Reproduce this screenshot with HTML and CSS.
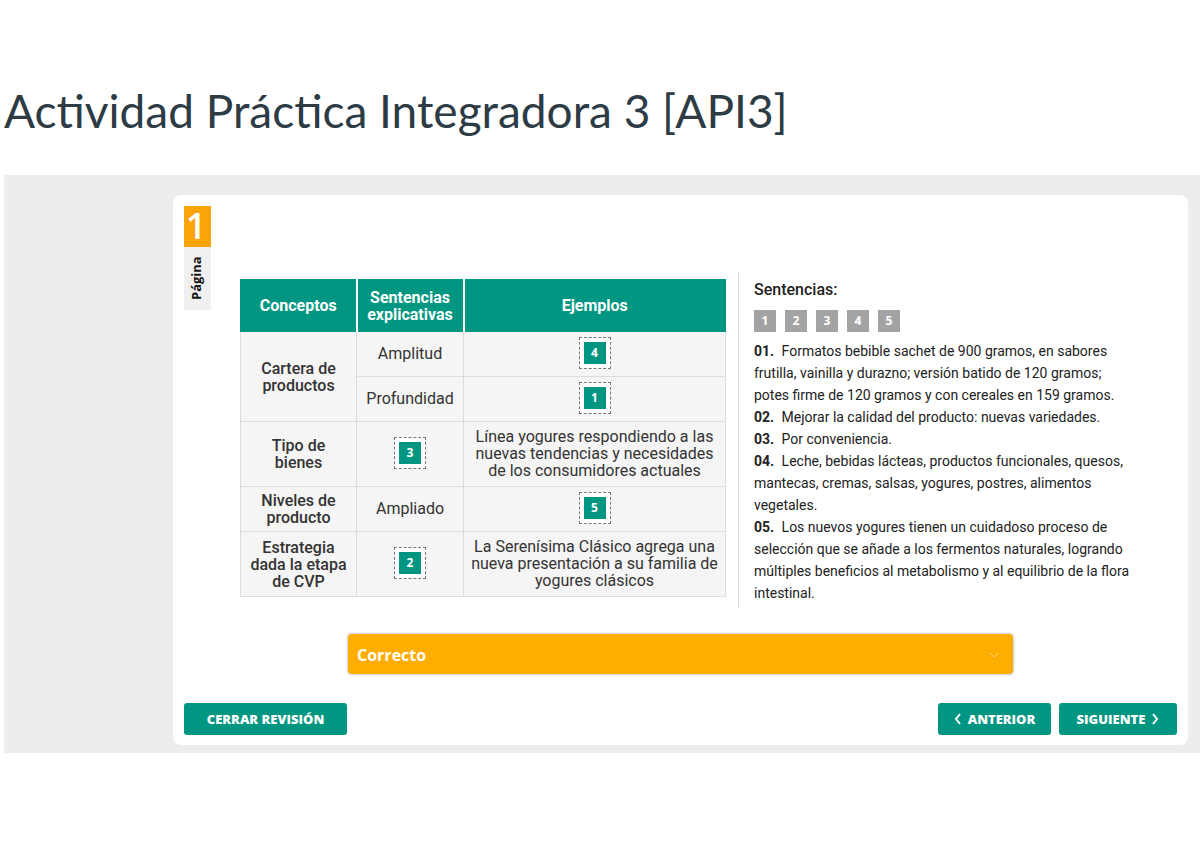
FILE: index.html
```html
<!DOCTYPE html>
<html lang="es">
<head>
    <meta charset="UTF-8">
    <meta name="viewport" content="width=device-width, initial-scale=1.0">
    <title>Actividad Práctica Integradora 3 [API3]</title>
    <link rel="stylesheet" href="styles.css">
</head>
<body>

<h1 class="title">Actividad Práctica Integradora 3 [API3]</h1>

<main class="activity">
    <div class="card">
        <div class="content">
            <div class="page-tab">
                <span class="page-number">1</span>
                <span class="page-label">Página</span>
            </div>

            <table class="concepts">
                <colgroup>
                    <col class="col-concept">
                    <col class="col-sentence">
                    <col>
                </colgroup>
                <thead>
                    <tr>
                        <th scope="col">Conceptos</th>
                        <th scope="col">Sentencias explicativas</th>
                        <th scope="col">Ejemplos</th>
                    </tr>
                </thead>
                <tbody>
                    <tr class="short">
                        <th scope="rowgroup" rowspan="2">Cartera de productos</th>
                        <td>Amplitud</td>
                        <td><span class="drop"><span class="chip">4</span></span></td>
                    </tr>
                    <tr class="short">
                        <td>Profundidad</td>
                        <td><span class="drop"><span class="chip">1</span></span></td>
                    </tr>
                    <tr class="tall">
                        <th scope="row">Tipo de<br>bienes</th>
                        <td><span class="drop"><span class="chip">3</span></span></td>
                        <td>Línea yogures respondiendo a las<br>nuevas tendencias y necesidades<br>de los consumidores actuales</td>
                    </tr>
                    <tr class="short">
                        <th scope="row">Niveles de producto</th>
                        <td>Ampliado</td>
                        <td><span class="drop"><span class="chip">5</span></span></td>
                    </tr>
                    <tr class="tall">
                        <th scope="row">Estrategia<br>dada la etapa<br>de CVP</th>
                        <td><span class="drop"><span class="chip">2</span></span></td>
                        <td>La Serenísima Clásico agrega una<br>nueva presentación a su familia de<br>yogures clásicos</td>
                    </tr>
                </tbody>
            </table>

            <section class="sentences">
                <h2>Sentencias:</h2>
                <div class="chips">
                    <span class="chip used">1</span>
                    <span class="chip used">2</span>
                    <span class="chip used">3</span>
                    <span class="chip used">4</span>
                    <span class="chip used">5</span>
                </div>
                <p><b>01.</b> Formatos bebible sachet de 900 gramos, en sabores<br>frutilla, vainilla y durazno; versión batido de 120 gramos;<br>potes firme de 120 gramos y con cereales en 159 gramos.</p>
                <p><b>02.</b> Mejorar la calidad del producto: nuevas variedades.</p>
                <p><b>03.</b> Por conveniencia.</p>
                <p><b>04.</b> Leche, bebidas lácteas, productos funcionales, quesos,<br>mantecas, cremas, salsas, yogures, postres, alimentos<br>vegetales.</p>
                <p><b>05.</b> Los nuevos yogures tienen un cuidadoso proceso de<br>selección que se añade a los fermentos naturales, logrando<br>múltiples beneficios al metabolismo y al equilibrio de la flora<br>intestinal.</p>
            </section>
        </div>

        <button class="feedback" type="button" aria-expanded="false">
            Correcto
            <svg width="10" height="6" viewBox="0 0 10 6" aria-hidden="true"><path d="M1 1l4 4 4-4"/></svg>
        </button>

        <div class="actions">
            <button class="btn btn-close" type="button">CERRAR REVISIÓN</button>
            <button class="btn btn-prev" type="button">
                <svg width="8" height="12" viewBox="0 0 8 12" aria-hidden="true"><path d="M6 1L2 6l4 5"/></svg>
                ANTERIOR
            </button>
            <button class="btn btn-next" type="button">
                SIGUIENTE
                <svg width="8" height="12" viewBox="0 0 8 12" aria-hidden="true"><path d="M2 1l4 5-4 5"/></svg>
            </button>
        </div>
    </div>
</main>

</body>
</html>
```
FILE: styles.css
```css
:root { --green: #009681; --orange: #ffad00; --grey: #ededed; --line: #dcdcdc; }
* { box-sizing: border-box; }
body { background-color: white; color: #222; font-family: Roboto, sans-serif; margin: 0; padding: 83px 0 0 4px; }

.title { margin: 0; font-family: Lato, sans-serif; font-size: 46px; line-height: 56px; font-weight: 400; color: #2d3b45; }

/* Activity */
.activity { margin-top: 36px; padding: 20px 12px 8px 169px; background-color: var(--grey); }
.card { background-color: white; padding: 11px 11px 10px; border-radius: 8px; }
.content { display: flex; align-items: flex-start; }

/* Page tab */
.page-tab { width: 27px; margin-right: 29px; flex: none; background-color: #f0f0f0; }
.page-number { display: block; height: 41px; padding-right: 3px; background-color: #fba40a; color: white; font-family: "Open Sans", sans-serif; font-size: 36px; line-height: 39px; font-weight: 600; text-align: center; }
.page-label { display: block; height: 63px; writing-mode: vertical-rl; transform: rotate(180deg); font-family: "Open Sans", sans-serif; font-size: 13px; line-height: 24px; font-weight: 700; text-align: center; color: #111; }

/* Table */
.concepts { width: 486px; flex: none; margin-top: 73px; border-collapse: collapse; table-layout: fixed; font-size: 16px; line-height: 17px; text-align: center; color: #333; }
.col-concept { width: 116px; }
.col-sentence { width: 107px; }
.concepts th, .concepts td { padding: 0 4px; border: 1px solid var(--line); background-color: #f5f5f5; }
.concepts td { padding-bottom: 2px; }
.concepts th { font-weight: 500; }
.concepts thead th { height: 52px; background-color: var(--green); border-color: var(--green); color: white; font-weight: 700; }
.concepts thead th + th { border-left: 2px solid white; }
.short { height: 45px; }
.tall { height: 65px; }
.drop { display: inline-flex; padding: 4px; border: 1px dashed #777; background-color: white; vertical-align: middle; }
.chip { width: 22px; height: 22px; background-color: var(--green); color: white; font-family: "Open Sans", sans-serif; font-size: 12px; line-height: 22px; font-weight: 700; text-align: center; }
.chip.used { background-color: #a3a3a3; }

/* Sentences */
.sentences { flex: 1; margin: 66px 0 0 12px; padding: 8px 0 5px 15px; border-left: 1px solid var(--line); font-size: 14px; line-height: 22px; }
.sentences h2 { margin: 0 0 10px; font-size: 16px; line-height: 20px; font-weight: 500; }
.sentences p { margin: 0; }
.sentences b { margin-right: 4px; }
.chips { display: flex; gap: 9px; margin-bottom: 8px; }

/* Feedback */
.feedback { display: flex; justify-content: space-between; align-items: center; width: calc(100% - 328px); height: 40px; margin: 25px auto 29px; padding: 2px 14px 0 9px; border: none; border-radius: 4px; background-color: var(--orange); box-shadow: 0 0 3px rgba(0,0,0,0.4); color: white; font-family: "Open Sans", sans-serif; font-size: 16px; font-weight: 700; cursor: pointer; }
.feedback path { fill: none; stroke: #ffd573; stroke-width: 1; }

/* Buttons */
.actions { display: flex; gap: 8px; }
.btn { display: flex; justify-content: center; align-items: center; gap: 6px; height: 32px; padding: 0; border: none; border-radius: 3px; background-color: var(--green); color: white; font-family: "Open Sans", sans-serif; font-size: 13px; font-weight: 800; cursor: pointer; }
.btn path { fill: none; stroke: white; stroke-width: 2; }
.btn-close { width: 163px; margin-right: auto; }
.btn-prev { width: 113px; }
.btn-next { width: 118px; }
```
